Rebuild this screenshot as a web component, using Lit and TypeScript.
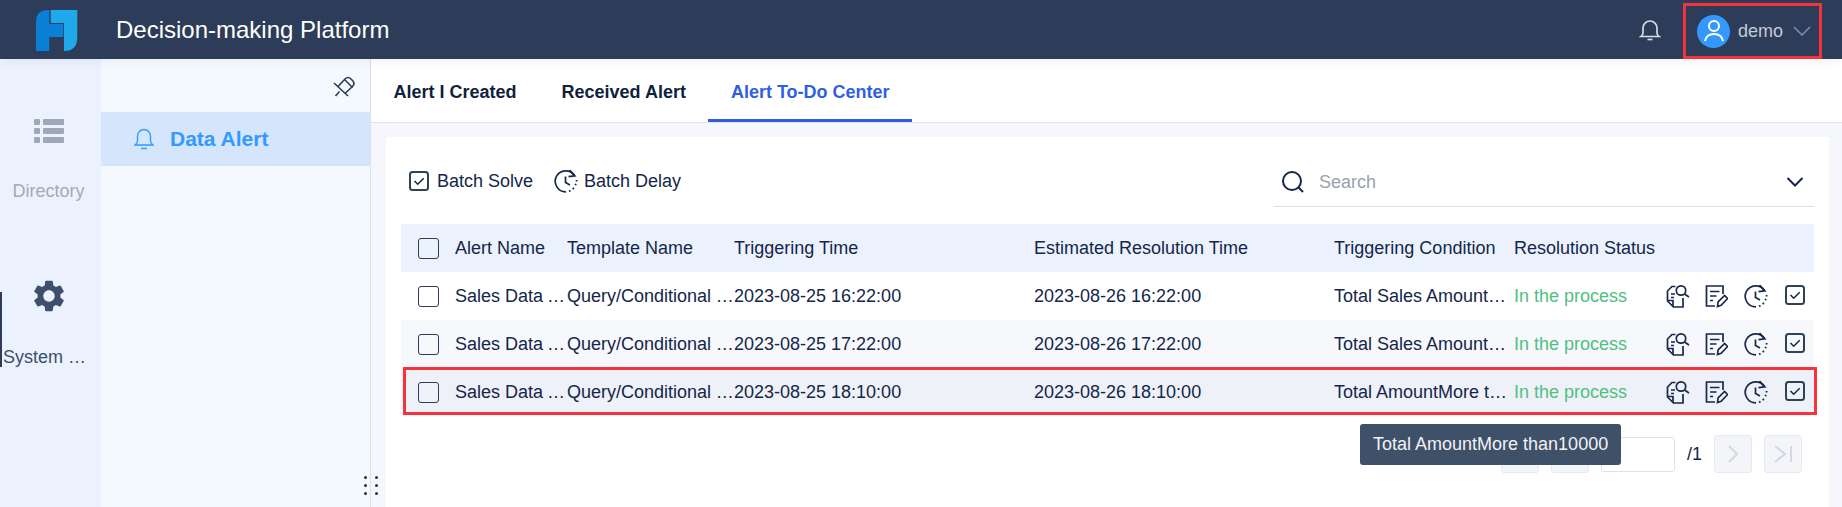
import { LitElement, html, css } from "lit";
import { customElement } from "lit/decorators.js";

const checkIcon = html`<svg class="ic" width="22" height="22" viewBox="0 0 22 22" fill="none"><rect x="2" y="2" width="18" height="18" rx="2.500" stroke="#2b4459" stroke-width="2"/><path d="M6.500 11l3.200 3.200 6-6" stroke="#1a2b45" stroke-width="1.600"/></svg>`;
const clockIcon = html`<svg class="ic" width="24" height="24" viewBox="0 0 24 24" fill="none" stroke="#16294a" stroke-width="1.700"><path d="M20.500 6.500A10.500 10.500 0 1 0 12 22.800"/><path d="M15.500 1.200L20.800 6.800l-6.300.9"/><path d="M11.500 7.500v6l4.500 2.500"/><path d="M15 22.300l1.500-.7M18.700 20.100l1.200-1.200M21.400 16.200l.5-1.500M22.600 12.500v-1.500" stroke-width="1.800"/></svg>`;
const docSearchIcon = html`<svg class="ic" width="24" height="24" viewBox="0 0 24 24" fill="none" stroke="#16294a" stroke-width="1.700"><path d="M9.500 2.500H6L1.500 7v10l6 6h9.500v-9"/><path d="M1.500 16.500h5.500v6"/><path d="M5 10h4M5 13.500h3"/><circle cx="15" cy="6.500" r="4.700"/><path d="M18.500 10l4.500 3"/></svg>`;
const editIcon = html`<svg class="ic edit" width="24" height="24" viewBox="0 0 24 24" fill="none" stroke="#16294a" stroke-width="1.700"><path d="M11 22H2.500V2h16.500v8"/><path d="M6 7.500h9.500M6 12h6.500M6 16.500h3"/><path d="M13.500 22.500l.6-4.500 6.500-6.500 3 3-6.500 6.800z"/></svg>`;

const rows = [
  ["2023-08-25 16:22:00", "2023-08-26 16:22:00", "Total Sales AmountMore than10000"],
  ["2023-08-25 17:22:00", "2023-08-26 17:22:00", "Total Sales AmountMore than10000"],
  ["2023-08-25 18:10:00", "2023-08-26 18:10:00", "Total AmountMore than10000"],
] as const;

@customElement("app-root")
export class AppRoot extends LitElement {
  static styles = css`
    :host { display: block; width: 100%; height: 100vh; overflow: hidden; font-family: "Liberation Sans", Arial, sans-serif; font-size: 18px; color: #14264a; }
    * { box-sizing: border-box; }
    svg { display: block; flex: none; }
    .page { display: flex; flex-direction: column; height: 507px; position: relative; }
    .head { height: 59px; flex: none; background: #2c3c59; display: flex; align-items: center; padding-left: 36px; position: relative; z-index: 2; box-shadow: 0 2px 10px rgba(0,0,0,.06); }
    .title { color: #fff; font-size: 24px; margin-left: 38px; flex: 1; white-space: nowrap; }
    .bell { margin-right: 22px; }
    .user { width: 139px; height: 56px; margin-top: 3px; margin-right: 20px; border: 3px solid #f5333a; display: flex; align-items: center; padding-left: 11px; color: #c6ccd6; }
    .user span { margin-left: 8px; width: 55px; }
    .avatar { width: 33px; height: 33px; border-radius: 50%; background: #3399ff; display: flex; align-items: center; justify-content: center; }
    .body { flex: 1; display: flex; min-height: 0; }
    .rail { width: 101px; flex: none; background: #ebf2fd; display: flex; flex-direction: column; }
    .rail-item { display: flex; flex-direction: column; align-items: center; white-space: nowrap; padding-right: 4px; }
    .rail-item.dir { color: #a3aab9; padding-top: 60px; gap: 38px; height: 161px; }
    .rail-item.sys { color: #3d4f6b; margin-top: 72px; height: 75px; position: relative; }
    .rail-item.sys::before { content: ""; position: absolute; left: 0; top: 0; bottom: 0; width: 2px; background: #2c3c59; }
    .gear { margin-top: -15px; margin-bottom: 32px; }
    .sys-label { align-self: flex-start; margin-left: 3px; width: 84px; overflow: hidden; text-overflow: ellipsis; }
    .panel { width: 270px; flex: none; background: #f4f8ff; border-right: 1px solid #dde1ea; position: relative; padding-top: 53px; }
    .pin { position: absolute; left: 232px; top: 17px; }
    .menu { height: 54px; background: #d5e6fc; display: flex; align-items: center; padding-left: 33px; gap: 16px; color: #3399ff; font-weight: 700; font-size: 21px; }
    .dots { position: absolute; right: -8px; bottom: 12px; display: grid; grid-template-columns: 3px 3px; gap: 5px 8px; z-index: 1; }
    .dots i { width: 3px; height: 3px; background: #1f2f49; border-radius: 50%; }
    .main { flex: 1; min-width: 0; background: #f5f7fc; display: flex; flex-direction: column; }
    .tabs { height: 64px; flex: none; background: #fff; border-bottom: 1px solid #dfe3ee; display: flex; font-weight: 700; color: #0f1f3d; }
    .tab { height: 63px; padding: 23px 22.500px 0; white-space: nowrap; }
    .tab.on { color: #2f5fde; border-bottom: 3px solid #2f5fde; }
    .card { flex: 1; margin: 14px 13px 0 15px; background: #fff; padding: 0 15px; min-height: 0; position: relative; }
    .bar { height: 87px; display: flex; align-items: center; padding-top: 2px; }
    .btn { display: flex; align-items: center; gap: 6px; white-space: nowrap; }
    .btn.b1 { margin-left: 7px; width: 146px; gap: 7px; }
    .btn .ic { margin-top: -1px; }
    .search { margin-left: auto; width: 540px; height: 47px; margin-top: 4px; border-bottom: 1px solid #dfe1ea; display: flex; align-items: center; padding: 0 10px 2px 7px; color: #99a1af; }
    .search span { margin-left: 14px; flex: 1; }
    .grid { display: grid; grid-template-columns: 54px 112px 167px 300px 300px 180px 152px 1fr; align-items: center; height: 48px; position: relative; }
    .grid > div { white-space: nowrap; overflow: hidden; text-overflow: ellipsis; }
    .grid > .cond { padding-right: 6px; }
    .thead { background: #ebf2fd; }
    .r2 { background: #f6f8fc; }
    .r3 { background: #eef1f7; }
    .r3::after { content: ""; position: absolute; left: 2px; right: -3px; top: -1px; bottom: 1px; border: 3px solid #f5333a; pointer-events: none; }
    .box { width: 21px; height: 21px; border: 1.500px solid #2c3c59; border-radius: 3px; margin-left: 17px; }
    .status { color: #4ec07f; }
    .grid > .acts { display: flex; gap: 16px; overflow: visible; }
    .acts .edit { margin-left: -2px; }
    .pager { display: flex; align-items: center; justify-content: flex-end; margin-top: 19px; margin-right: 12px; gap: 12px; position: relative; }
    .pg { width: 38px; height: 38px; background: #f4f5f8; border: 1px solid #e6e9ef; border-radius: 3px; display: flex; align-items: center; justify-content: center; }
    .inp { width: 74px; height: 35px; border: 1px solid #dfe1ea; border-radius: 3px; background: #fff; }
    .total { width: 15px; white-space: nowrap; }
    .tip { position: absolute; left: 959px; top: -11px; width: 261px; height: 41px; background: #3f5069; border-radius: 3px; color: #f0f2f5; padding: 0 13px; display: flex; align-items: center; white-space: nowrap; z-index: 3; }
  `;

  render() {
    return html`<div class="page">
      <header class="head">
        <svg width="42" height="42" viewBox="36 8 42 42"><path d="M36 50V21q0-12 12-12h1.300v14h14v13h-14v14z" fill="#0a7fd6"/><path d="M50.700 9H77.300v27q0 14-13.300 14V22H50.700z" fill="#1fa9ea"/></svg>
        <div class="title">Decision-making Platform</div>
        <svg class="bell" width="22" height="24" viewBox="0 0 22 24" fill="none" stroke="#d8dbe0" stroke-width="1.700"><path d="M2 18.500c1.500-1 2-2 2-4V10a7 7 0 0 1 14 0v4.500c0 2 .5 3 2 4z"/><path d="M8.500 21.500h5"/></svg>
        <div class="user">
          <div class="avatar"><svg width="24" height="26" viewBox="0 0 24 26" fill="none" stroke="#fff" stroke-width="2"><circle cx="12" cy="8" r="5"/><path d="M3 23c1-5 4.500-7 9-7s8 2 9 7"/></svg></div>
          <span>demo</span>
          <svg width="18" height="10" viewBox="0 0 18 10" fill="none" stroke="#7f8ca0" stroke-width="1.600"><path d="M1 1l8 8 8-8"/></svg>
        </div>
      </header>
      <div class="body">
        <nav class="rail">
          <div class="rail-item dir">
            <svg width="30" height="24" viewBox="0 0 30 24" fill="#9fa8b8"><rect width="6" height="6" rx="1"/><rect x="9" width="21" height="6" rx="1"/><rect y="9" width="6" height="6" rx="1"/><rect x="9" y="9" width="21" height="6" rx="1"/><rect y="18" width="6" height="6" rx="1"/><rect x="9" y="18" width="21" height="6" rx="1"/></svg>
            <span>Directory</span>
          </div>
          <div class="rail-item sys">
            <svg class="gear" width="38" height="38" viewBox="0 0 24 24" fill="#3d4f6b"><path d="M19.140 12.940c.04-.3.06-.61.06-.94 0-.32-.02-.64-.07-.94l2.030-1.580a.49.49 0 0 0 .12-.61l-1.920-3.320a.488.488 0 0 0-.59-.22l-2.390.96c-.5-.38-1.030-.7-1.620-.94l-.36-2.540a.484.484 0 0 0-.48-.41h-3.840c-.24 0-.43.17-.47.41l-.36 2.540c-.59.24-1.130.57-1.620.94l-2.390-.96c-.22-.08-.47 0-.59.22L2.740 8.870c-.12.21-.08.47.12.61l2.030 1.580c-.05.3-.09.63-.09.94s.02.64.07.94l-2.030 1.580a.49.49 0 0 0-.12.61l1.920 3.320c.12.22.37.29.59.22l2.390-.96c.5.38 1.030.7 1.620.94l.36 2.540c.05.24.24.41.48.41h3.840c.24 0 .44-.17.47-.41l.36-2.540c.59-.24 1.130-.56 1.620-.94l2.390.96c.22.08.47 0 .59-.22l1.920-3.320c.12-.22.07-.47-.12-.61l-2.010-1.580zM12 15.600c-1.980 0-3.600-1.620-3.600-3.600s1.620-3.600 3.600-3.600 3.600 1.620 3.600 3.600-1.620 3.600-3.600 3.600z"/></svg>
            <div class="sys-label">System Management</div>
          </div>
        </nav>
        <aside class="panel">
          <svg class="pin" width="22" height="22" viewBox="0 0 22 22" fill="none" stroke="#2c3c59" stroke-width="1.600"><path d="M1 7l14 13"/><path d="M5 10.500L12 3q3-3 6 0l1.500 1.500q3 3 0 6L12.500 17"/><path d="M11.500 3.500l8 8"/><path d="M6.500 15.500L2.500 20"/></svg>
          <div class="menu">
            <svg width="20" height="22" viewBox="0 0 20 22" fill="none" stroke="#3399ff" stroke-width="1.400"><path d="M1 17c1.500-1 2.500-2 2.500-4V8a6.500 6.500 0 0 1 13 0v5c0 2 1 3 2.500 4z"/><path d="M7 20.500h6"/></svg>
            <span>Data Alert</span>
          </div>
          <div class="dots"><i></i><i></i><i></i><i></i><i></i><i></i></div>
        </aside>
        <main class="main">
          <div class="tabs">
            <div class="tab">Alert I Created</div>
            <div class="tab">Received Alert</div>
            <div class="tab on">Alert To-Do Center</div>
          </div>
          <section class="card">
            <div class="bar">
              <div class="btn b1">${checkIcon}<span>Batch Solve</span></div>
              <div class="btn">${clockIcon}<span>Batch Delay</span></div>
              <div class="search">
                <svg width="24" height="24" viewBox="0 0 24 24" fill="none" stroke="#14264a" stroke-width="2"><circle cx="11" cy="11" r="9"/><path d="M17 17l5 5"/></svg>
                <span>Search</span>
                <svg width="18" height="10" viewBox="0 0 18 10" fill="none" stroke="#14264a" stroke-width="2"><path d="M1.500 1l7.500 7.500L16.500 1"/></svg>
              </div>
            </div>
            <div class="grid thead">
              <div><div class="box"></div></div>
              <div>Alert Name</div><div>Template Name</div><div>Triggering Time</div><div>Estimated Resolution Time</div><div>Triggering Condition</div><div>Resolution Status</div><div></div>
            </div>
            ${rows.map((r, i) => html`<div class="grid ${i === 1 ? "r2" : i === 2 ? "r3" : ""}">
              <div><div class="box"></div></div>
              <div>Sales Data Alert</div>
              <div>Query/Conditional Template</div>
              <div>${r[0]}</div>
              <div>${r[1]}</div>
              <div class="cond">${r[2]}</div>
              <div class="status">In the process</div>
              <div class="acts">${docSearchIcon}${editIcon}${clockIcon}${checkIcon}</div>
            </div>`)}
            <div class="pager">
              <div class="tip">Total AmountMore than10000</div>
              <div class="pg"></div>
              <div class="pg"></div>
              <div class="inp"></div>
              <div class="total">/1</div>
              <div class="pg"><svg width="12" height="20" viewBox="0 0 12 20" fill="none" stroke="#d5d8e0" stroke-width="2"><path d="M2 2l8 8-8 8"/></svg></div>
              <div class="pg"><svg width="20" height="20" viewBox="0 0 20 20" fill="none" stroke="#d5d8e0" stroke-width="2"><path d="M2 2l10 8-10 8M18 2v16"/></svg></div>
            </div>
          </section>
        </main>
      </div>
    </div>`;
  }
}
